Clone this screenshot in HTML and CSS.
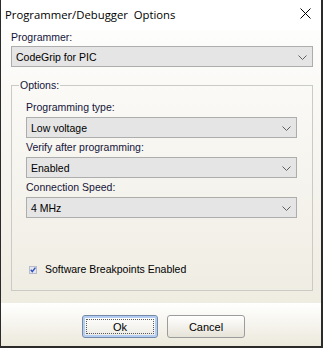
FILE: index.html
```html
<!DOCTYPE html>
<html lang="en">
<head>
  <meta charset="UTF-8">
  <title>Programmer/Debugger Options</title>
  <link rel="stylesheet" href="styles.css">
</head>
<body>
  <div class="window">
    <div class="titlebar">
      <span class="title">Programmer/Debugger  Options</span>
      <svg class="close" width="11" height="11" viewBox="0 0 11 11">
        <path d="M0.5 0.5 L10.5 10.5 M10.5 0.5 L0.5 10.5" stroke="#000" stroke-width="1" fill="none"/>
      </svg>
    </div>
    <div class="content">
      <label class="field-label">Programmer:</label>
      <div class="combo">
        <span>CodeGrip for PIC</span>
        <svg class="chev" width="9" height="5" viewBox="0 0 9 5"><path d="M0.5 0.5 L4.5 4.5 L8.5 0.5" stroke="#606060" fill="none"/></svg>
      </div>
      <fieldset class="group">
        <legend>Options:</legend>
        <div class="item">
          <label class="field-label">Programming type:</label>
          <div class="combo">
            <span>Low voltage</span>
            <svg class="chev" width="9" height="5" viewBox="0 0 9 5"><path d="M0.5 0.5 L4.5 4.5 L8.5 0.5" stroke="#606060" fill="none"/></svg>
          </div>
        </div>
        <div class="item">
          <label class="field-label">Verify after programming:</label>
          <div class="combo">
            <span>Enabled</span>
            <svg class="chev" width="9" height="5" viewBox="0 0 9 5"><path d="M0.5 0.5 L4.5 4.5 L8.5 0.5" stroke="#606060" fill="none"/></svg>
          </div>
        </div>
        <div class="item">
          <label class="field-label">Connection Speed:</label>
          <div class="combo">
            <span>4 MHz</span>
            <svg class="chev" width="9" height="5" viewBox="0 0 9 5"><path d="M0.5 0.5 L4.5 4.5 L8.5 0.5" stroke="#606060" fill="none"/></svg>
          </div>
        </div>
        <div class="check-row">
          <svg class="checkbox" width="8" height="8" viewBox="0 0 8 8">
            <rect x="0.5" y="0.5" width="7" height="7" fill="#e4e5ee" stroke="#b8bccb"/>
            <path d="M1.8 3.8 L3.3 5.6 L6.4 1.6" stroke="#2b4fb8" stroke-width="1.4" fill="none"/>
          </svg>
          <span>Software Breakpoints Enabled</span>
        </div>
      </fieldset>
    </div>
    <div class="footer">
      <button class="btn btn-default"><span class="focus">Ok</span></button>
      <button class="btn btn-cancel">Cancel</button>
    </div>
  </div>
</body>
</html>
```

FILE: styles.css
```css
body {
  margin: 0;
  background: #fff;
  font-family: 'Liberation Sans', Arial, sans-serif;
  font-size: 10.5px;
}
.window {
  width: 323px;
  height: 348px;
  box-sizing: border-box;
  border-left: 1px solid #2b2b2b;
  border-right: 2px solid #2b2b2b;
  border-bottom: 2px solid #2b2b2b;
  display: flex;
  flex-direction: column;
}
/* Title bar */
.titlebar {
  height: 30px;
  flex: none;
  background: #fff;
  display: flex;
  align-items: flex-start;
  justify-content: space-between;
  padding: 0 10px 0 4px;
}
.title {
  white-space: pre;
  font-family: 'Open Sans', 'Noto Sans', sans-serif;
  font-size: 11.3px;
  line-height: 16px;
  margin-top: 7px;
  color: #000;
}
.close {
  margin-top: 8px;
}
/* Main area */
.content {
  flex: 1;
  padding: 1px 8px 0 10px;
  background: linear-gradient(#fdfdfc, #efece2);
}
.field-label {
  display: block;
  line-height: 13px;
  color: #14143a;
  margin-bottom: 2px;
}
.combo {
  height: 21px;
  box-sizing: border-box;
  border: 1px solid #adadad;
  background: #e5e5e5;
  display: flex;
  align-items: center;
  justify-content: space-between;
  padding: 0 5px 0 4px;
  color: #000;
}
.chev {
  margin-top: 1px;
}
.group {
  margin: 12px 0 0 0;
  padding: 9px 15px 14px 14px;
  border: 1px solid #cbcbc6;
}
.group legend {
  line-height: 13px;
  padding: 0 1px;
  margin-left: -7px;
  color: #14143a;
}
.item {
  margin-bottom: 3px;
}
.item .field-label {
  margin-bottom: 3px;
}
.check-row {
  margin-top: 45px;
  display: flex;
  align-items: center;
  gap: 8px;
  line-height: 13px;
  padding-left: 3px;
  color: #000;
}
/* Buttons */
.footer {
  height: 43px;
  flex: none;
  box-sizing: border-box;
  padding: 12px 0 0 5px;
  background: linear-gradient(#ffffff, #ece9dc);
  display: flex;
  justify-content: center;
  align-items: flex-start;
  gap: 9px;
}
.btn {
  height: 23px;
  font-family: 'Liberation Sans', Arial, sans-serif;
  font-size: 11px;
  color: #000;
  border-radius: 3px;
  padding: 0;
  display: flex;
  align-items: center;
  justify-content: center;
}
.btn-default {
  width: 76px;
  border: 1px solid #7488a8;
  box-shadow: inset 0 0 0 2px #b4cdf2;
  background: linear-gradient(#ffffff, #eceae2);
  padding: 3px;
}
.btn-default .focus {
  flex: 1;
  align-self: stretch;
  display: flex;
  align-items: center;
  justify-content: center;
  border: 1px dotted #5a5a5a;
}
.btn-cancel {
  width: 78px;
  border: 1px solid #9c9c9c;
  background: linear-gradient(#ffffff, #e6e3d8);
}
```
